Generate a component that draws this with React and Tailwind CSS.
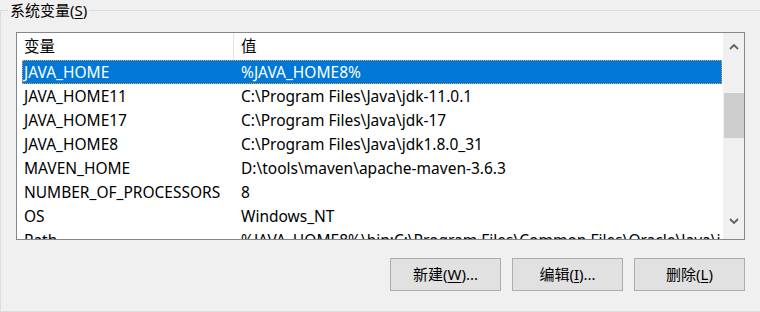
import React from "react";

const FONT = { fontFamily: '"Noto Sans", "Noto Sans CJK SC", sans-serif' };

const ROWS = [
  ["JAVA_HOME", "%JAVA_HOME8%"],
  ["JAVA_HOME11", "C:\\Program Files\\Java\\jdk-11.0.1"],
  ["JAVA_HOME17", "C:\\Program Files\\Java\\jdk-17"],
  ["JAVA_HOME8", "C:\\Program Files\\Java\\jdk1.8.0_31"],
  ["MAVEN_HOME", "D:\\tools\\maven\\apache-maven-3.6.3"],
  ["NUMBER_OF_PROCESSORS", "8"],
  ["OS", "Windows_NT"],
  ["Path", "%JAVA_HOME8%\\bin;C:\\Program Files\\Common Files\\Oracle\\Java\\javapath"],
];

function Chevron({ down }) {
  return (
    <svg width="10" height="6" viewBox="0 0 10 6" className="block">
      <path
        d={down ? "M1 1 L5 5 L9 1" : "M1 5 L5 1 L9 5"}
        fill="none"
        stroke="#606060"
        strokeWidth="1.8"
      />
    </svg>
  );
}

function Btn({ pre, key_, post }) {
  return (
    <button className="w-[111px] h-[33px] bg-[#e1e1e1] border border-[#adadad] text-[15px] text-black flex items-center justify-center">
      {pre}(<span className="underline underline-offset-2">{key_}</span>){post}
    </button>
  );
}

export default function App() {
  return (
    <div className="w-[760px] h-[312px] bg-[#f0f0f0] overflow-hidden text-black" style={FONT}>
      <fieldset className="w-[780px] h-[312px] border border-[#dcdcdc] m-0 p-0">
        <legend className="ml-[7px] px-[2px] text-[15px] leading-[20px]">
          系统变量(<span className="underline underline-offset-2">S</span>)
        </legend>

        <div className="ml-[15px] mt-[12px] w-[729px] h-[208px] border border-[#828790] bg-white flex">
          <div className="w-[706px] flex flex-col overflow-hidden text-[15.5px]">
            <div className="h-[27px] shrink-0 flex items-center">
              <div className="w-[217px] h-full pl-[7px] flex items-center border-r border-[#e5e5e5]">变量</div>
              <div className="pl-[7px]">值</div>
            </div>
            {ROWS.map(([name, value], i) => (
              <div
                key={name}
                className={
                  "h-[24px] shrink-0 ml-[5px] pt-[1px] flex items-center whitespace-nowrap " +
                  (i === 0
                    ? "bg-[#0078d7] text-white border border-dotted border-[#e8a050]"
                    : "border border-transparent")
                }
              >
                <div className="w-[211px] pl-[1px] shrink-0">{name}</div>
                <div className="pl-[7px]">{value}</div>
              </div>
            ))}
          </div>
          <div className="w-[21px] ml-[1px] bg-[#f0f0f0] flex flex-col items-center">
            <div className="h-[23px] shrink-0 flex items-end justify-center pb-[6px]">
              <Chevron />
            </div>
            <div className="mt-[37px] w-[20px] h-[45px] bg-[#cdcdcd]" />
            <div className="flex-1" />
            <div className="h-[24px] shrink-0 flex items-start justify-center pt-[3px]">
              <Chevron down />
            </div>
          </div>
        </div>

        <div className="mt-[18px] flex gap-[11px] pl-[389px]">
          <Btn pre="新建" key_="W" post="..." />
          <Btn pre="编辑" key_="I" post="..." />
          <Btn pre="删除" key_="L" post="" />
        </div>
      </fieldset>
    </div>
  );
}
